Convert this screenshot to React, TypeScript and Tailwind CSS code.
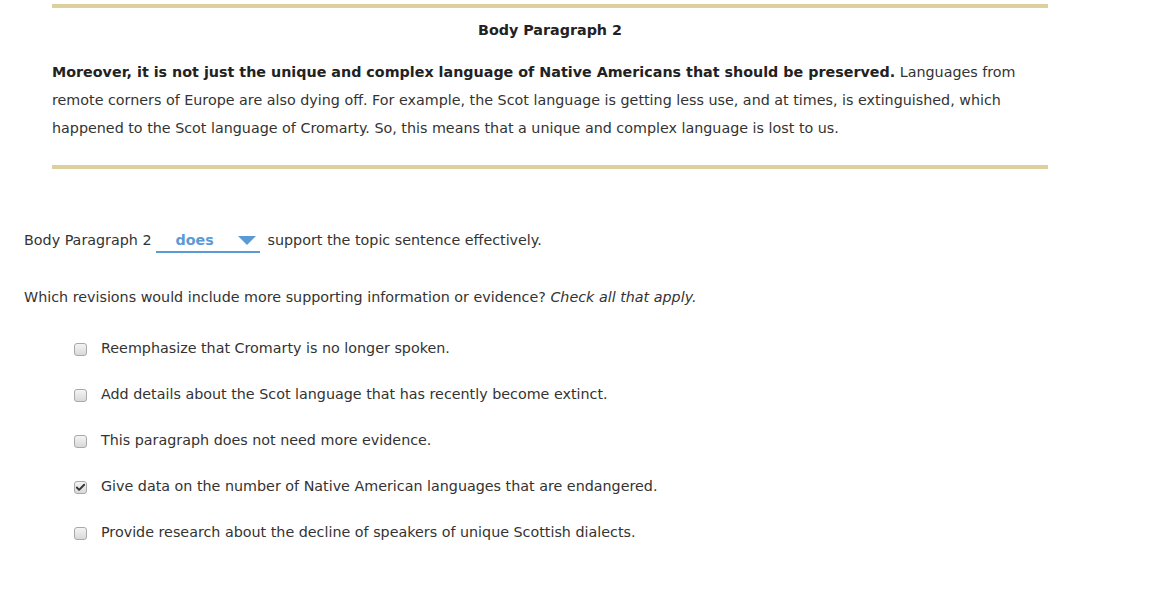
import { Check } from "lucide-react";

const OPTIONS: Array<{ text: string; checked: boolean }> = [
  { text: "Reemphasize that Cromarty is no longer spoken.", checked: false },
  { text: "Add details about the Scot language that has recently become extinct.", checked: false },
  { text: "This paragraph does not need more evidence.", checked: false },
  { text: "Give data on the number of Native American languages that are endangered.", checked: true },
  { text: "Provide research about the decline of speakers of unique Scottish dialects.", checked: false },
];

function Box({ checked }: { checked: boolean }) {
  return (
    <span className="flex h-[13px] w-[13px] shrink-0 items-center justify-center rounded-[3px] border border-[#a9a9a9] bg-gradient-to-b from-[#f4f4f4] to-[#d9d9d9]">
      {checked && <Check className="h-[11px] w-[11px] text-[#333]" strokeWidth={4} />}
    </span>
  );
}

export default function App() {
  return (
    <div className="min-h-[592px] w-[1156px] bg-white text-[14.3px] text-[#333] [font-family:'DejaVu_Sans',Verdana,sans-serif]">
      <div className="ml-[52px] w-[996px] pt-1">
        <div className="h-1 bg-[#ddd09d]" />
        <h2 className="mt-[12px] text-center font-bold leading-5 text-[#222]">Body Paragraph 2</h2>
        <p className="mt-[18px] leading-[28px]">
          <b className="text-[#222]">Moreover, it is not just the unique and complex language of Native Americans that should be preserved.</b>{" "}
          Languages from remote corners of Europe are also dying off. For example, the Scot language is getting less use, and at times, is extinguished, which happened to the Scot language of Cromarty. So, this means that a unique and complex language is lost to us.
        </p>
        <div className="mt-[23px] h-1 bg-[#ddd09d]" />
      </div>

      <div className="ml-6 mt-[61px] flex items-baseline leading-5">
        <span>Body Paragraph 2</span>
        <span className="ml-1 flex w-[104px] items-baseline justify-between border-b-2 border-[#5b9bd5] pb-[1px] pl-5 pr-1">
          <b className="text-[#5b9bd5]">does</b>
          <svg width="18" height="9" viewBox="0 0 18 9">
            <polygon points="0,0 18,0 9,9" fill="#5b9bd5" />
          </svg>
        </span>
        <span className="ml-2">support the topic sentence effectively.</span>
      </div>

      <p className="ml-6 mt-[34px] leading-5">
        Which revisions would include more supporting information or evidence? <i>Check all that apply.</i>
      </p>

      <ul className="ml-[74px] mt-[32px] flex flex-col gap-[26px]">
        {OPTIONS.map((item) => (
          <li key={item.text} className="flex h-5 items-center gap-[14px]">
            <Box checked={item.checked} />
            <span>{item.text}</span>
          </li>
        ))}
      </ul>
    </div>
  );
}
